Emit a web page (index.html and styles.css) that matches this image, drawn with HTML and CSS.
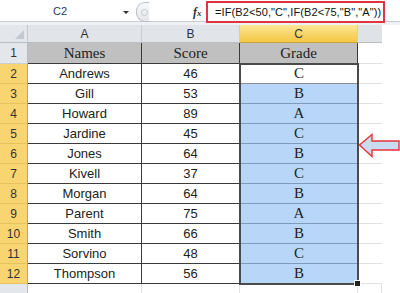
FILE: index.html
```html
<!DOCTYPE html>
<html>
<head>
<meta charset="utf-8">
<link rel="stylesheet" href="styles.css">
</head>
<body>
<div class="app">
  <div class="fbar">
    <div class="namebox"><span class="nb-text">C2</span><span class="nb-arrow"></span></div>
    <div class="grip"><span class="grip-dot"></span></div>
    <div class="fx">f<span class="fx-x">x</span></div>
    <div class="formula">=IF(B2&lt;50,"C",IF(B2&lt;75,"B","A"))</div>
  </div>
  <div class="sheet">
    <div class="corner"><span class="tri"></span></div>
    <div class="ch">A</div><div class="ch">B</div><div class="ch active">C</div><div class="ch xh"></div><div class="f"></div>

    <div class="rh">1</div><div class="th">Names</div><div class="th">Score</div><div class="th">Grade</div><div class="x"></div><div class="f"></div>

    <div class="rh y">2</div><div class="c">Andrews</div><div class="c">46</div><div class="g w">C</div><div class="x"></div><div class="f"></div>
    <div class="rh y">3</div><div class="c">Gill</div><div class="c">53</div><div class="g">B</div><div class="x"></div><div class="f"></div>
    <div class="rh y">4</div><div class="c">Howard</div><div class="c">89</div><div class="g">A</div><div class="x"></div><div class="f"></div>
    <div class="rh y">5</div><div class="c">Jardine</div><div class="c">45</div><div class="g">C</div><div class="x"></div><div class="f"></div>
    <div class="rh y">6</div><div class="c">Jones</div><div class="c">64</div><div class="g">B</div><div class="x"></div><div class="f"></div>
    <div class="rh y">7</div><div class="c">Kivell</div><div class="c">37</div><div class="g">C</div><div class="x"></div><div class="f"></div>
    <div class="rh y">8</div><div class="c">Morgan</div><div class="c">64</div><div class="g">B</div><div class="x"></div><div class="f"></div>
    <div class="rh y">9</div><div class="c">Parent</div><div class="c">75</div><div class="g">A</div><div class="x"></div><div class="f"></div>
    <div class="rh y">10</div><div class="c">Smith</div><div class="c">66</div><div class="g">B</div><div class="x"></div><div class="f"></div>
    <div class="rh y">11</div><div class="c">Sorvino</div><div class="c">48</div><div class="g">C</div><div class="x"></div><div class="f"></div>
    <div class="rh y">12</div><div class="c">Thompson</div><div class="c">56</div><div class="g">B</div><div class="x"></div><div class="f"></div>

    <div class="rh"></div><div class="e"></div><div class="e"></div><div class="e"></div><div class="e"></div><div class="f"></div>

    <div class="sel"></div>
  </div>
  <svg class="arrow" width="42" height="25" viewBox="0 0 42 25">
    <polygon points="1.5,12 14,1.5 14,8 41,8 41,17 14,17 14,23.5" fill="#c8dbef" stroke="#e8323a" stroke-width="1.4" stroke-linejoin="miter"/>
  </svg>
</div>
</body>
</html>
```

FILE: styles.css
```css
html, body {
  margin: 0;
  padding: 0;
  background: #ffffff;
}
.app {
  position: relative;
  width: 400px;
  height: 293px;
  overflow: hidden;
  font-family: "Liberation Sans", Arial, sans-serif;
}
.fbar {
  display: flex;
  align-items: flex-start;
  height: 25px;
  background: linear-gradient(#ffffff 0, #ffffff 21px, #c9cdd3 21px, #c9cdd3 22px, #eef0f3 22px);
}
.namebox {
  position: relative;
  width: 130px;
  height: 21px;
  background: #ffffff;
  display: flex;
  align-items: center;
  justify-content: center;
}
.nb-text {
  font-size: 11px;
  color: #1e3a66;
  margin-left: -10px;
}
.nb-arrow {
  position: absolute;
  left: 123px;
  top: 11px;
  width: 0;
  height: 0;
  border-left: 3px solid transparent;
  border-right: 3px solid transparent;
  border-top: 3px solid #333;
}
.grip {
  margin-left: 6px;
  margin-top: 2px;
  width: 12px;
  height: 18px;
  border: 1px solid #b9bec6;
  border-right: none;
  border-radius: 9px 0 0 9px;
  background: linear-gradient(#f7f8fa, #e3e6ea);
  display: flex;
  align-items: center;
  justify-content: center;
}
.grip-dot {
  width: 5px;
  height: 5px;
  border-radius: 50%;
  border: 1px solid #c4c8ce;
  margin-left: 2px;
}
.fx {
  margin-left: 44px;
  margin-top: 5px;
  font-family: "Liberation Serif", serif;
  font-style: italic;
  font-weight: bold;
  font-size: 12px;
  color: #333;
  width: 12px;
}
.fx-x {
  font-size: 9px;
}
.formula {
  margin-left: 1px;
  margin-top: 1px;
  width: 179px;
  height: 22px;
  box-sizing: border-box;
  border: 2px solid #e0353f;
  background: #ffffff;
  font-size: 11px;
  line-height: 18px;
  padding-left: 7px;
  color: #111;
  white-space: nowrap;
  letter-spacing: 0.1px;
}
.sheet {
  position: relative;
  display: grid;
  grid-template-columns: 28px 114px 98px 118px 24px 1fr;
  grid-template-rows: 18px 21px repeat(11, 20px) 20px;
}
.sheet > div {
  box-sizing: border-box;
}
.corner {
  background: #e3e7ec;
  border-right: 1px solid #c5cad1;
  border-bottom: 1px solid #b7bdc5;
  position: relative;
}
.tri {
  position: absolute;
  right: 3px;
  bottom: 3px;
  width: 0;
  height: 0;
  border-left: 9px solid transparent;
  border-bottom: 9px solid #c3c8cf;
}
.ch {
  background: #e1e5ea;
  border-right: 1px solid #c9ced5;
  border-bottom: 1px solid #b7bdc5;
  font-size: 12px;
  color: #333;
  display: flex;
  align-items: center;
  justify-content: center;
}
.ch.active {
  background: linear-gradient(#fde79a, #f8d362 60%, #f4c845);
  border-bottom: 1px solid #c9a63c;
}
.ch.xh {
  background: #dfe3e8;
  border-right: none;
}
.rh {
  background: #e3e7ec;
  border-right: 1px solid #b7bdc5;
  border-bottom: 1px solid #c9ced5;
  font-size: 12px;
  color: #333;
  display: flex;
  align-items: center;
  justify-content: center;
}
.rh.y {
  background: #f9d571;
  border-bottom: 1px solid #e8c35d;
  border-right: 1px solid #c9a63c;
}
.th {
  background: #c0c0c0;
  border-right: 1px solid #3a3a3a;
  border-bottom: 1px solid #3a3a3a;
  font-family: "Liberation Serif", serif;
  font-size: 15px;
  color: #222;
  display: flex;
  align-items: center;
  justify-content: center;
}
.c {
  background: #ffffff;
  border-right: 1px solid #3a3a3a;
  border-bottom: 1px solid #3a3a3a;
  font-size: 13px;
  color: #222;
  display: flex;
  align-items: center;
  justify-content: center;
}
.g {
  background: #b7d6f8;
  border-bottom: 1px solid #7f9abb;
  font-family: "Liberation Serif", serif;
  font-size: 15px;
  color: #222;
  display: flex;
  align-items: center;
  justify-content: center;
}
.g.w {
  background: #ffffff;
  border-bottom: 1px solid #8a8f96;
}
.x {
  background: #ffffff;
  border-bottom: 1px solid #dfe1e3;
}
.e {
  background: #ffffff;
  border-right: 1px solid #dfe1e3;
}
.f {
  background: #ffffff;
}
.sel {
  position: absolute;
  left: 239px;
  top: 38px;
  width: 120px;
  height: 222px;
  box-sizing: border-box;
  border: 2px solid #4a4a4a;
  pointer-events: none;
}
.sel::after {
  content: "";
  position: absolute;
  right: -4px;
  bottom: -4px;
  width: 5px;
  height: 5px;
  background: #222;
  border: 1px solid #ffffff;
}
.arrow {
  position: absolute;
  left: 358px;
  top: 133px;
}
```
